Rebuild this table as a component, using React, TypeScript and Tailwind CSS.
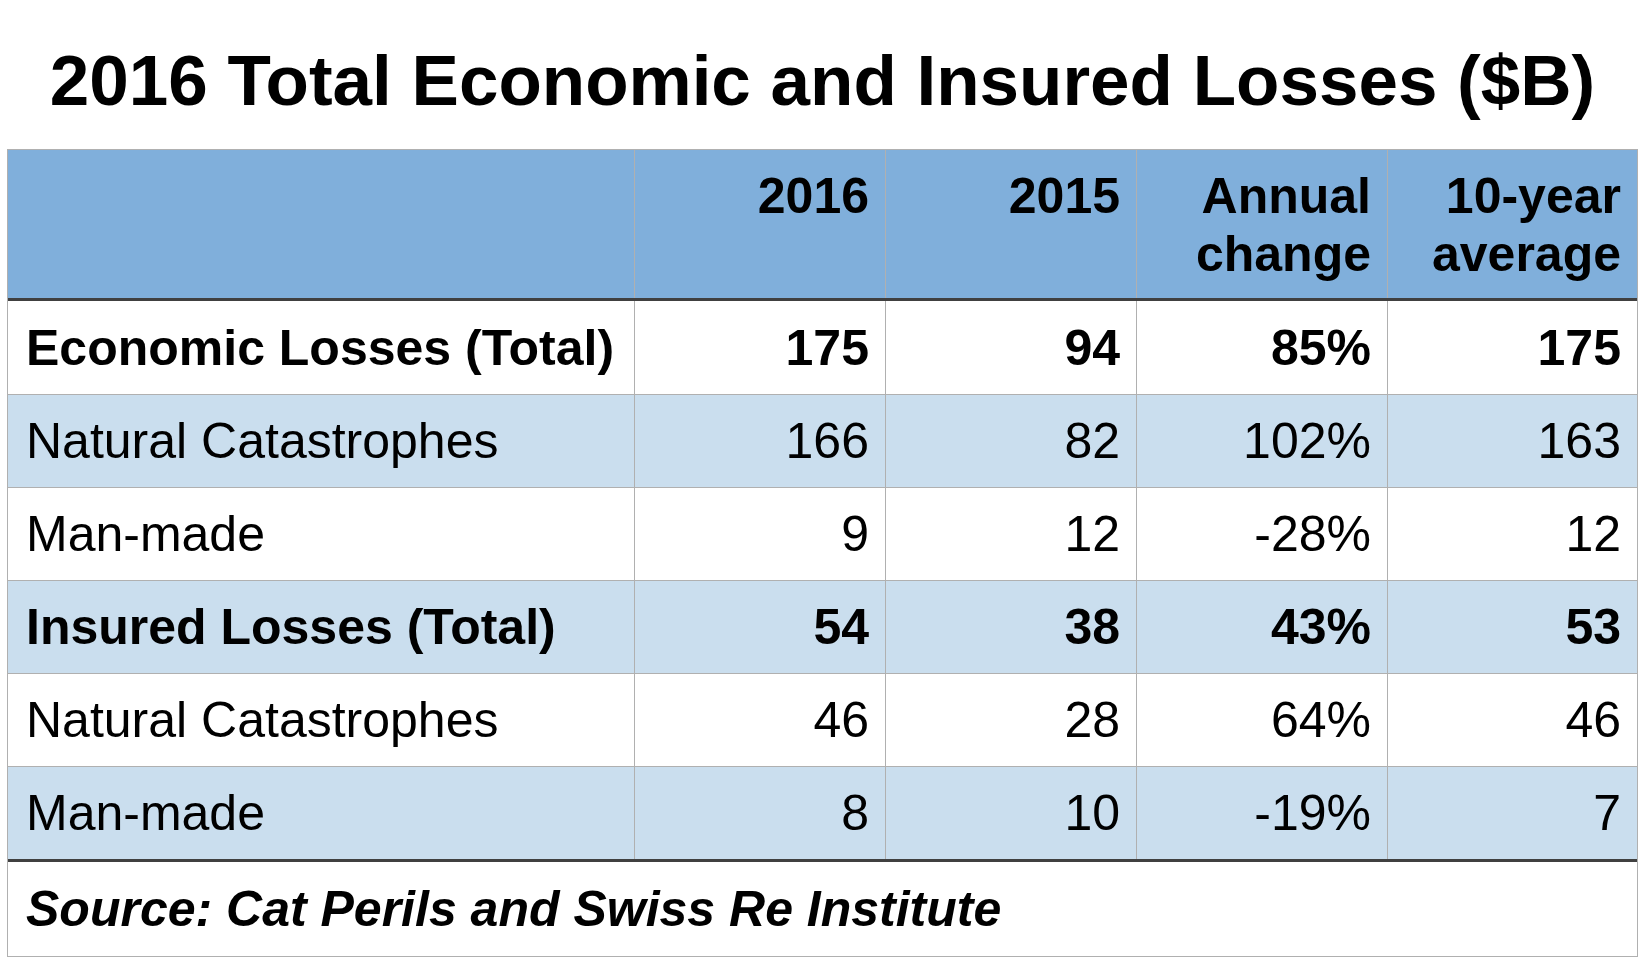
const COLS = 'grid grid-cols-[626px_251px_251px_251px_1fr]';

const ROWS = [
  { label: 'Economic Losses (Total)', values: ['175', '94', '85%', '175'], bold: true, shaded: false },
  { label: 'Natural Catastrophes', values: ['166', '82', '102%', '163'], bold: false, shaded: true },
  { label: 'Man-made', values: ['9', '12', '-28%', '12'], bold: false, shaded: false },
  { label: 'Insured Losses (Total)', values: ['54', '38', '43%', '53'], bold: true, shaded: true },
  { label: 'Natural Catastrophes', values: ['46', '28', '64%', '46'], bold: false, shaded: false },
  { label: 'Man-made', values: ['8', '10', '-19%', '7'], bold: false, shaded: true },
];

export default function App() {
  return (
    <div className="w-[1645px] h-[962px] bg-white text-black font-['Liberation_Sans',Arial,sans-serif]">
      {/* Title */}
      <h1 className="h-[149px] pt-[41px] text-center text-[71px] leading-[80px] font-bold">
        2016 Total Economic and Insured Losses ($B)
      </h1>

      {/* Table */}
      <div className="ml-[7px] w-[1631px] border border-[#b0b0b0] text-[50px] leading-[58px]">
        <div className={`${COLS} h-[151px] bg-[#80afdb] border-b-[3px] border-[#404040] font-bold`}>
          <div />
          {['2016', '2015', 'Annual change', '10-year average'].map((h) => (
            <div key={h} className="border-l border-[#b0b0b0] pt-[17px] pr-[16px] text-right">
              {h.includes(' ') ? (
                <>
                  {h.split(' ')[0]}
                  <br />
                  {h.split(' ')[1]}
                </>
              ) : (
                h
              )}
            </div>
          ))}
        </div>

        {ROWS.map((row, i) => (
          <div
            key={i}
            className={`${COLS} h-[93px] ${i > 0 ? 'border-t border-[#b0b0b0]' : ''} ${row.shaded ? 'bg-[#cadeee]' : 'bg-white'} ${row.bold ? 'font-bold' : ''}`}
          >
            <div className="flex items-center pl-[18px]">{row.label}</div>
            {row.values.map((v, j) => (
              <div key={j} className="flex items-center justify-end border-l border-[#b0b0b0] pr-[16px]">
                {v}
              </div>
            ))}
          </div>
        ))}

        <div className="flex h-[97px] items-center border-t-[3px] border-[#404040] pl-[18px] font-bold italic">
          Source: Cat Perils and Swiss Re Institute
        </div>
      </div>
    </div>
  );
}
